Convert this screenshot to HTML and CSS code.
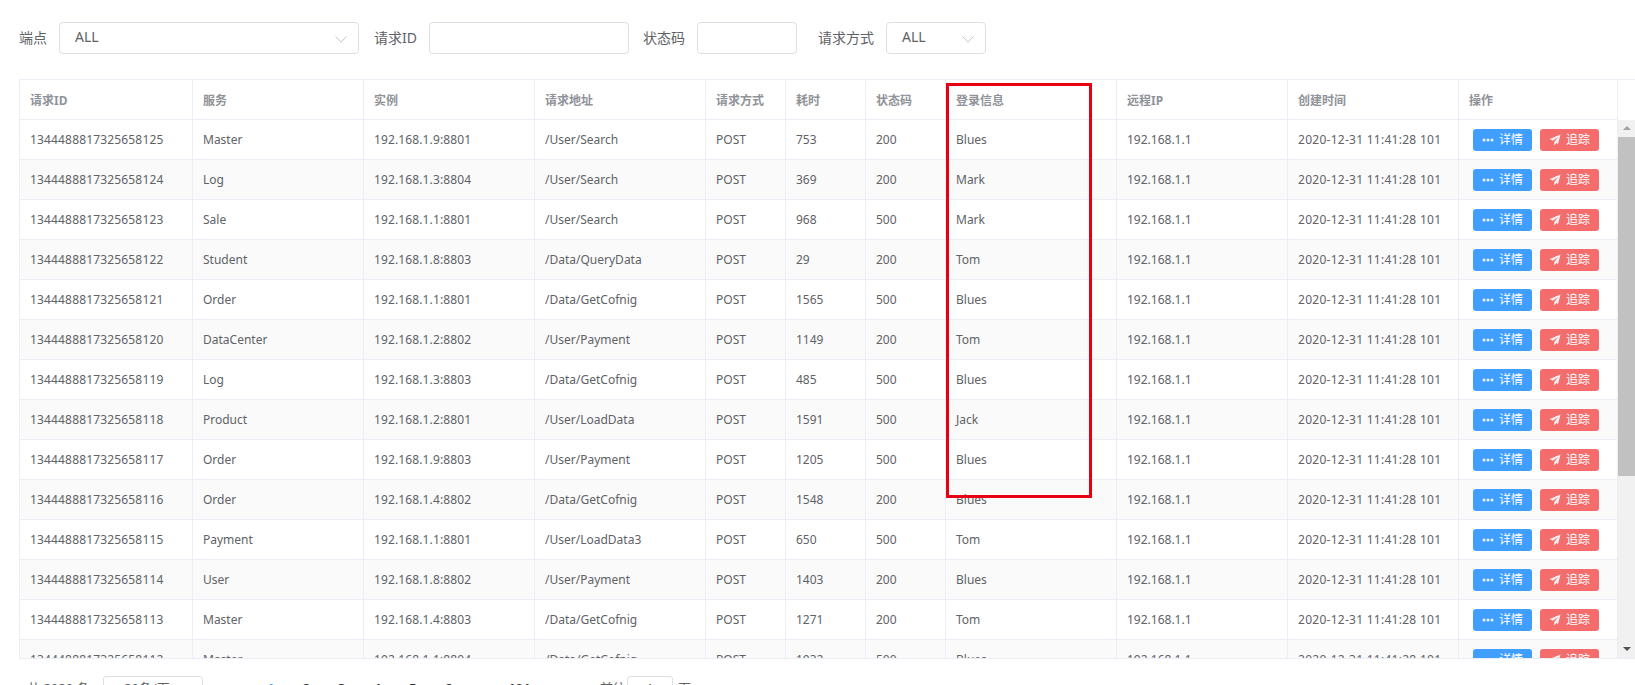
FILE: index.html
```html
<!DOCTYPE html>
<html>

<head>
    <title>请求日志</title>
    <link rel="stylesheet" href="styles.css">
</head>

<body>
    <svg class="sprites" width="0" height="0">
        <symbol id="icon-more" viewBox="0 0 12 12">
            <circle cx="2" cy="6" r="1.5" />
            <circle cx="6" cy="6" r="1.5" />
            <circle cx="10" cy="6" r="1.5" />
        </symbol>
        <symbol id="icon-plane" viewBox="0 0 12 12">
            <path d="M11.5.5.5 5l3.3 1.8L9.2 2.9 5.2 8v3.5l2-2.5L9 10z" />
        </symbol>
    </svg>

    <form class="filters">
        <label class="filter-label">端点</label>
        <div class="select select-wide"><span>ALL</span><svg class="arrow" viewBox="0 0 12 7"><path d="M.5.5 6 6.2 11.5.5" /></svg></div>
        <label class="filter-label">请求ID</label>
        <div class="input input-id"></div>
        <label class="filter-label">状态码</label>
        <div class="input input-code"></div>
        <label class="filter-label filter-label-wide">请求方式</label>
        <div class="select select-small"><span>ALL</span><svg class="arrow" viewBox="0 0 12 7"><path d="M.5.5 6 6.2 11.5.5" /></svg></div>
    </form>

    <div class="table-box">
        <div class="table-head">
            <table>
                <colgroup>
                    <col class="c-wide-first"><col class="c-wide"><col class="c-wide"><col class="c-wide"><col class="c-small"><col class="c-small"><col class="c-small"><col class="c-wide"><col class="c-wide"><col class="c-wide"><col class="c-last">
                </colgroup>
                <tr>
                    <th>请求ID</th><th>服务</th><th>实例</th><th>请求地址</th><th>请求方式</th><th>耗时</th><th>状态码</th><th>登录信息</th><th>远程IP</th><th>创建时间</th><th>操作</th>
                </tr>
            </table>
        </div>
        <div class="table-body">
            <table>
                <colgroup>
                    <col class="c-wide-first"><col class="c-wide"><col class="c-wide"><col class="c-wide"><col class="c-small"><col class="c-small"><col class="c-small"><col class="c-wide"><col class="c-wide"><col class="c-wide"><col class="c-last">
                </colgroup>
                <tr>
                    <td>1344488817325658125</td><td>Master</td><td>192.168.1.9:8801</td><td>/User/Search</td><td>POST</td><td>753</td><td>200</td><td>Blues</td><td>192.168.1.1</td><td>2020-12-31 11:41:28 101</td>
                    <td class="ops"><button class="btn btn-blue"><svg><use href="#icon-more" /></svg>详情</button><button class="btn btn-red"><svg><use href="#icon-plane" /></svg>追踪</button></td>
                </tr>
                <tr>
                    <td>1344488817325658124</td><td>Log</td><td>192.168.1.3:8804</td><td>/User/Search</td><td>POST</td><td>369</td><td>200</td><td>Mark</td><td>192.168.1.1</td><td>2020-12-31 11:41:28 101</td>
                    <td class="ops"><button class="btn btn-blue"><svg><use href="#icon-more" /></svg>详情</button><button class="btn btn-red"><svg><use href="#icon-plane" /></svg>追踪</button></td>
                </tr>
                <tr>
                    <td>1344488817325658123</td><td>Sale</td><td>192.168.1.1:8801</td><td>/User/Search</td><td>POST</td><td>968</td><td>500</td><td>Mark</td><td>192.168.1.1</td><td>2020-12-31 11:41:28 101</td>
                    <td class="ops"><button class="btn btn-blue"><svg><use href="#icon-more" /></svg>详情</button><button class="btn btn-red"><svg><use href="#icon-plane" /></svg>追踪</button></td>
                </tr>
                <tr>
                    <td>1344488817325658122</td><td>Student</td><td>192.168.1.8:8803</td><td>/Data/QueryData</td><td>POST</td><td>29</td><td>200</td><td>Tom</td><td>192.168.1.1</td><td>2020-12-31 11:41:28 101</td>
                    <td class="ops"><button class="btn btn-blue"><svg><use href="#icon-more" /></svg>详情</button><button class="btn btn-red"><svg><use href="#icon-plane" /></svg>追踪</button></td>
                </tr>
                <tr>
                    <td>1344488817325658121</td><td>Order</td><td>192.168.1.1:8801</td><td>/Data/GetCofnig</td><td>POST</td><td>1565</td><td>500</td><td>Blues</td><td>192.168.1.1</td><td>2020-12-31 11:41:28 101</td>
                    <td class="ops"><button class="btn btn-blue"><svg><use href="#icon-more" /></svg>详情</button><button class="btn btn-red"><svg><use href="#icon-plane" /></svg>追踪</button></td>
                </tr>
                <tr>
                    <td>1344488817325658120</td><td>DataCenter</td><td>192.168.1.2:8802</td><td>/User/Payment</td><td>POST</td><td>1149</td><td>200</td><td>Tom</td><td>192.168.1.1</td><td>2020-12-31 11:41:28 101</td>
                    <td class="ops"><button class="btn btn-blue"><svg><use href="#icon-more" /></svg>详情</button><button class="btn btn-red"><svg><use href="#icon-plane" /></svg>追踪</button></td>
                </tr>
                <tr>
                    <td>1344488817325658119</td><td>Log</td><td>192.168.1.3:8803</td><td>/Data/GetCofnig</td><td>POST</td><td>485</td><td>500</td><td>Blues</td><td>192.168.1.1</td><td>2020-12-31 11:41:28 101</td>
                    <td class="ops"><button class="btn btn-blue"><svg><use href="#icon-more" /></svg>详情</button><button class="btn btn-red"><svg><use href="#icon-plane" /></svg>追踪</button></td>
                </tr>
                <tr>
                    <td>1344488817325658118</td><td>Product</td><td>192.168.1.2:8801</td><td>/User/LoadData</td><td>POST</td><td>1591</td><td>500</td><td>Jack</td><td>192.168.1.1</td><td>2020-12-31 11:41:28 101</td>
                    <td class="ops"><button class="btn btn-blue"><svg><use href="#icon-more" /></svg>详情</button><button class="btn btn-red"><svg><use href="#icon-plane" /></svg>追踪</button></td>
                </tr>
                <tr>
                    <td>1344488817325658117</td><td>Order</td><td>192.168.1.9:8803</td><td>/User/Payment</td><td>POST</td><td>1205</td><td>500</td><td>Blues</td><td>192.168.1.1</td><td>2020-12-31 11:41:28 101</td>
                    <td class="ops"><button class="btn btn-blue"><svg><use href="#icon-more" /></svg>详情</button><button class="btn btn-red"><svg><use href="#icon-plane" /></svg>追踪</button></td>
                </tr>
                <tr>
                    <td>1344488817325658116</td><td>Order</td><td>192.168.1.4:8802</td><td>/Data/GetCofnig</td><td>POST</td><td>1548</td><td>200</td><td>Blues</td><td>192.168.1.1</td><td>2020-12-31 11:41:28 101</td>
                    <td class="ops"><button class="btn btn-blue"><svg><use href="#icon-more" /></svg>详情</button><button class="btn btn-red"><svg><use href="#icon-plane" /></svg>追踪</button></td>
                </tr>
                <tr>
                    <td>1344488817325658115</td><td>Payment</td><td>192.168.1.1:8801</td><td>/User/LoadData3</td><td>POST</td><td>650</td><td>500</td><td>Tom</td><td>192.168.1.1</td><td>2020-12-31 11:41:28 101</td>
                    <td class="ops"><button class="btn btn-blue"><svg><use href="#icon-more" /></svg>详情</button><button class="btn btn-red"><svg><use href="#icon-plane" /></svg>追踪</button></td>
                </tr>
                <tr>
                    <td>1344488817325658114</td><td>User</td><td>192.168.1.8:8802</td><td>/User/Payment</td><td>POST</td><td>1403</td><td>200</td><td>Blues</td><td>192.168.1.1</td><td>2020-12-31 11:41:28 101</td>
                    <td class="ops"><button class="btn btn-blue"><svg><use href="#icon-more" /></svg>详情</button><button class="btn btn-red"><svg><use href="#icon-plane" /></svg>追踪</button></td>
                </tr>
                <tr>
                    <td>1344488817325658113</td><td>Master</td><td>192.168.1.4:8803</td><td>/Data/GetCofnig</td><td>POST</td><td>1271</td><td>200</td><td>Tom</td><td>192.168.1.1</td><td>2020-12-31 11:41:28 101</td>
                    <td class="ops"><button class="btn btn-blue"><svg><use href="#icon-more" /></svg>详情</button><button class="btn btn-red"><svg><use href="#icon-plane" /></svg>追踪</button></td>
                </tr>
                <tr>
                    <td>1344488817325658112</td><td>Master</td><td>192.168.1.1:8804</td><td>/Data/GetCofnig</td><td>POST</td><td>1932</td><td>500</td><td>Blues</td><td>192.168.1.1</td><td>2020-12-31 11:41:28 101</td>
                    <td class="ops"><button class="btn btn-blue"><svg><use href="#icon-more" /></svg>详情</button><button class="btn btn-red"><svg><use href="#icon-plane" /></svg>追踪</button></td>
                </tr>
            </table>
            <div class="scrollbar">
                <div class="scroll-up"></div>
                <div class="scroll-thumb"></div>
                <div class="scroll-down"></div>
            </div>
        </div>
    </div>

    <div class="pager">
        <span class="pager-total">共 2020 条</span>
        <div class="pager-size">20条/页</div>
        <span class="pager-prev">&lsaquo;</span>
        <ul class="pager-list">
            <li class="active">1</li>
            <li>2</li>
            <li>3</li>
            <li>4</li>
            <li>5</li>
            <li>6</li>
            <li>···</li>
            <li>101</li>
        </ul>
        <span class="pager-next">&rsaquo;</span>
        <span class="pager-goto">前往</span>
        <div class="pager-input">1</div>
        <span>页</span>
    </div>

    <div class="mark"></div>
</body>

</html>
```

FILE: styles.css
```css
html,
body {
    margin: 0;
    padding: 0;
    height: 100%;
    overflow: hidden;
}

body {
    font-family: "Noto Sans", "Noto Sans CJK SC", sans-serif;
    font-size: 12px;
    color: #606266;
    background-color: #fff;
}

.sprites {
    display: block;
    height: 0;
}

/* 筛选栏 */
.filters {
    display: flex;
    align-items: center;
    height: 32px;
    padding: 22px 0 0 19px;
    font-size: 14px;
}

.filter-label {
    margin-right: 12px;
    margin-bottom: 2px;
    white-space: nowrap;
}

.filter-label-wide {
    margin-left: 6px;
}

.select,
.input {
    box-sizing: border-box;
    height: 32px;
    margin-right: 15px;
    border: 1px solid #dcdfe6;
    border-radius: 4px;
    flex: none;
}

.select {
    display: flex;
    align-items: center;
    justify-content: space-between;
    padding: 0 11px 0 15px;
}

.select span {
    margin-bottom: 3px;
}

.select-wide {
    width: 300px;
}

.select-small {
    width: 100px;
}

.input-id {
    width: 200px;
    margin-right: 14px;
}

.input-code {
    width: 100px;
}

.arrow {
    width: 12px;
    height: 7px;
    margin-top: 3px;
    fill: none;
    stroke: #c0c4cc;
    stroke-width: 1;
}

/* 表格 */
.table-box {
    margin: 25px 0 0 19px;
    border-top: 1px solid #ebeef5;
    border-bottom: 1px solid #ebeef5;
}

.table-head,
.table-body {
    border-left: 1px solid #ebeef5;
}

.table-body {
    display: flex;
    height: 538px;
    overflow: hidden;
}

table {
    width: 1598px;
    flex: none;
    table-layout: fixed;
    border-collapse: separate;
    border-spacing: 0;
    align-self: flex-start;
}

.c-wide-first {
    width: 173px;
}

.c-wide {
    width: 171px;
}

.c-small {
    width: 80px;
}

.c-last {
    width: 159px;
}

th,
td {
    box-sizing: border-box;
    height: 40px;
    padding: 0 10px;
    text-align: left;
    white-space: nowrap;
    border-right: 1px solid #ebeef5;
    border-bottom: 1px solid #ebeef5;
}

th {
    color: #909399;
    font-weight: 700;
}

/* 数字列略宽一点 */
td:nth-child(1) {
    letter-spacing: 0.16px;
}

td:nth-child(3) {
    letter-spacing: 0.12px;
}

td:nth-child(10) {
    letter-spacing: 0.27px;
}

tr:nth-child(even) td {
    background-color: #fafafa;
}

td.ops {
    padding-left: 14px;
    padding-right: 0;
    font-size: 0;
}

.btn {
    display: inline-flex;
    align-items: center;
    justify-content: center;
    box-sizing: border-box;
    width: 59px;
    height: 22px;
    margin-right: 8px;
    padding: 0;
    border: none;
    border-radius: 3px;
    color: #fff;
    font-family: inherit;
    font-size: 12px;
    line-height: 1;
}

.btn svg {
    width: 12px;
    height: 12px;
    margin-right: 5px;
    fill: #fff;
    opacity: 0.9;
}

.btn-blue {
    background-color: #409eff;
}

.btn-red {
    background-color: #f56c6c;
}

/* 滚动条 */
.scrollbar {
    display: flex;
    flex-direction: column;
    width: 17px;
    flex: none;
    background-color: #f1f1f1;
}

.scroll-up,
.scroll-down {
    position: relative;
    height: 17px;
    flex: none;
}

.scroll-up::after,
.scroll-down::after {
    content: "";
    position: absolute;
    left: 5px;
    top: 6px;
    border-left: 4px solid transparent;
    border-right: 4px solid transparent;
}

.scroll-up::after {
    border-bottom: 4px solid #a3a3a3;
}

.scroll-down::after {
    border-top: 4px solid #505050;
}

.scroll-thumb {
    height: 339px;
    margin-bottom: auto;
    background-color: #c1c1c1;
}

/* 分页 */
.pager {
    display: flex;
    align-items: flex-start;
    height: 28px;
    margin-top: 17px;
    padding-left: 27px;
    font-size: 13px;
    line-height: 24px;
    white-space: nowrap;
}

.pager-total {
    width: 76px;
    flex: none;
}

.pager-size {
    box-sizing: border-box;
    width: 100px;
    height: 28px;
    padding-left: 20px;
    line-height: 22px;
    border: 1px solid #dcdfe6;
    border-radius: 3px;
    flex: none;
}

.pager-prev {
    margin-left: 27px;
    width: 23px;
    color: #c0c4cc;
    font-weight: 700;
}

.pager-list {
    display: flex;
    margin: 0;
    padding: 0;
    list-style: none;
    color: #303133;
    font-weight: 700;
}

.pager-list li {
    width: 35.5px;
    text-align: center;
}

.pager-list li.active {
    color: #409eff;
}

.pager-next {
    margin-left: 15px;
    width: 30px;
    color: #303133;
    font-weight: 700;
}

.pager-goto {
    margin-left: 18px;
}

.pager-input {
    box-sizing: border-box;
    width: 46px;
    height: 28px;
    margin: 0 5px 0 1px;
    line-height: 22px;
    text-align: center;
    border: 1px solid #dcdfe6;
    border-radius: 3px;
}

/* 截图上的红色标注框 */
.mark {
    position: absolute;
    left: 946px;
    top: 83px;
    box-sizing: border-box;
    width: 146px;
    height: 415px;
    border: 3.5px solid #e60012;
}
```
